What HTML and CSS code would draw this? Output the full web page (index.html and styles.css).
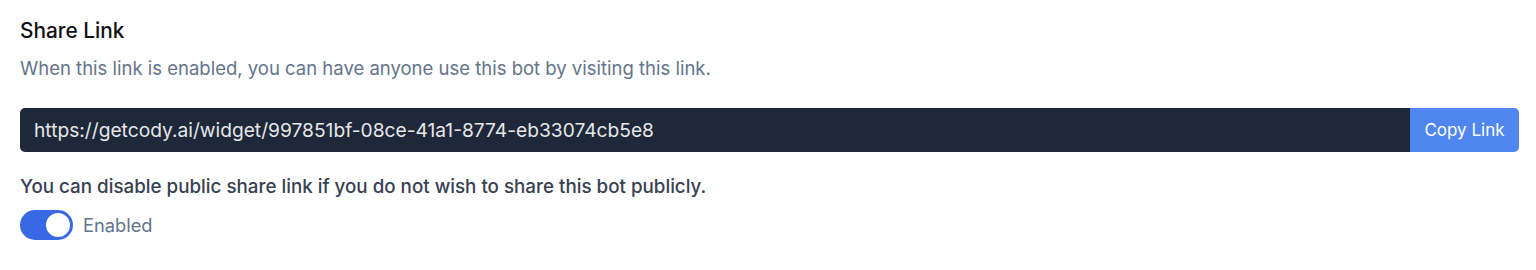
FILE: index.html
```html
<!DOCTYPE html>
<html>
<head>
<meta charset="utf-8">
<link rel="stylesheet" href="styles.css">
</head>
<body>
<div class="page">
  <h2 class="title">Share Link</h2>
  <p class="desc">When this link is enabled, you can have anyone use this bot by visiting this link.</p>
  <div class="linkrow">
    <div class="url">https://getcody.ai/widget/997851bf-08ce-41a1-8774-eb33074cb5e8</div>
    <button class="copy">Copy Link</button>
  </div>
  <p class="note">You can disable public share link if you do not wish to share this bot publicly.</p>
  <div class="toggle-row">
    <span class="toggle"><span class="knob"></span></span>
    <span class="toggle-label">Enabled</span>
  </div>
</div>
</body>
</html>
```
FILE: styles.css
```css
html, body { margin: 0; padding: 0; background: #fff; }
body { font-family: Inter, "Noto Sans", sans-serif; }
.page { padding: 18px 17px 0 20px; }
.title { margin: 0; font-size: 20.8px; font-weight: 500; color: #111; line-height: 26px; }
.desc { margin: 12px 0 0; font-size: 18.5px; color: #64748b; line-height: 24px; }
.linkrow { display: flex; margin-top: 28px; height: 44px; }
.url { flex: 1; background: #1f2838; color: #e5e7eb; border-radius: 5px 0 0 5px; font-size: 19.2px; display: flex; align-items: center; padding-left: 14px; }
.copy { width: 109px; border: 0; background: #4f86ef; color: #fff; font-family: inherit; font-size: 17px; border-radius: 0 5px 5px 0; padding: 0; }
.note { margin: 23px 0 0; font-size: 18.8px; font-weight: 500; color: #374151; line-height: 24px; }
.toggle-row { display: flex; align-items: center; margin-top: 11px; gap: 10px; }
.toggle { width: 53px; height: 30px; background: #3868e4; border-radius: 15px; position: relative; display: inline-block; }
.knob { position: absolute; right: 1px; top: 1px; width: 28px; height: 28px; border-radius: 50%; background: #fff; box-sizing: border-box; border: 2px solid #3868e4; }
.toggle-label { font-size: 18.3px; color: #64748b; }
```
